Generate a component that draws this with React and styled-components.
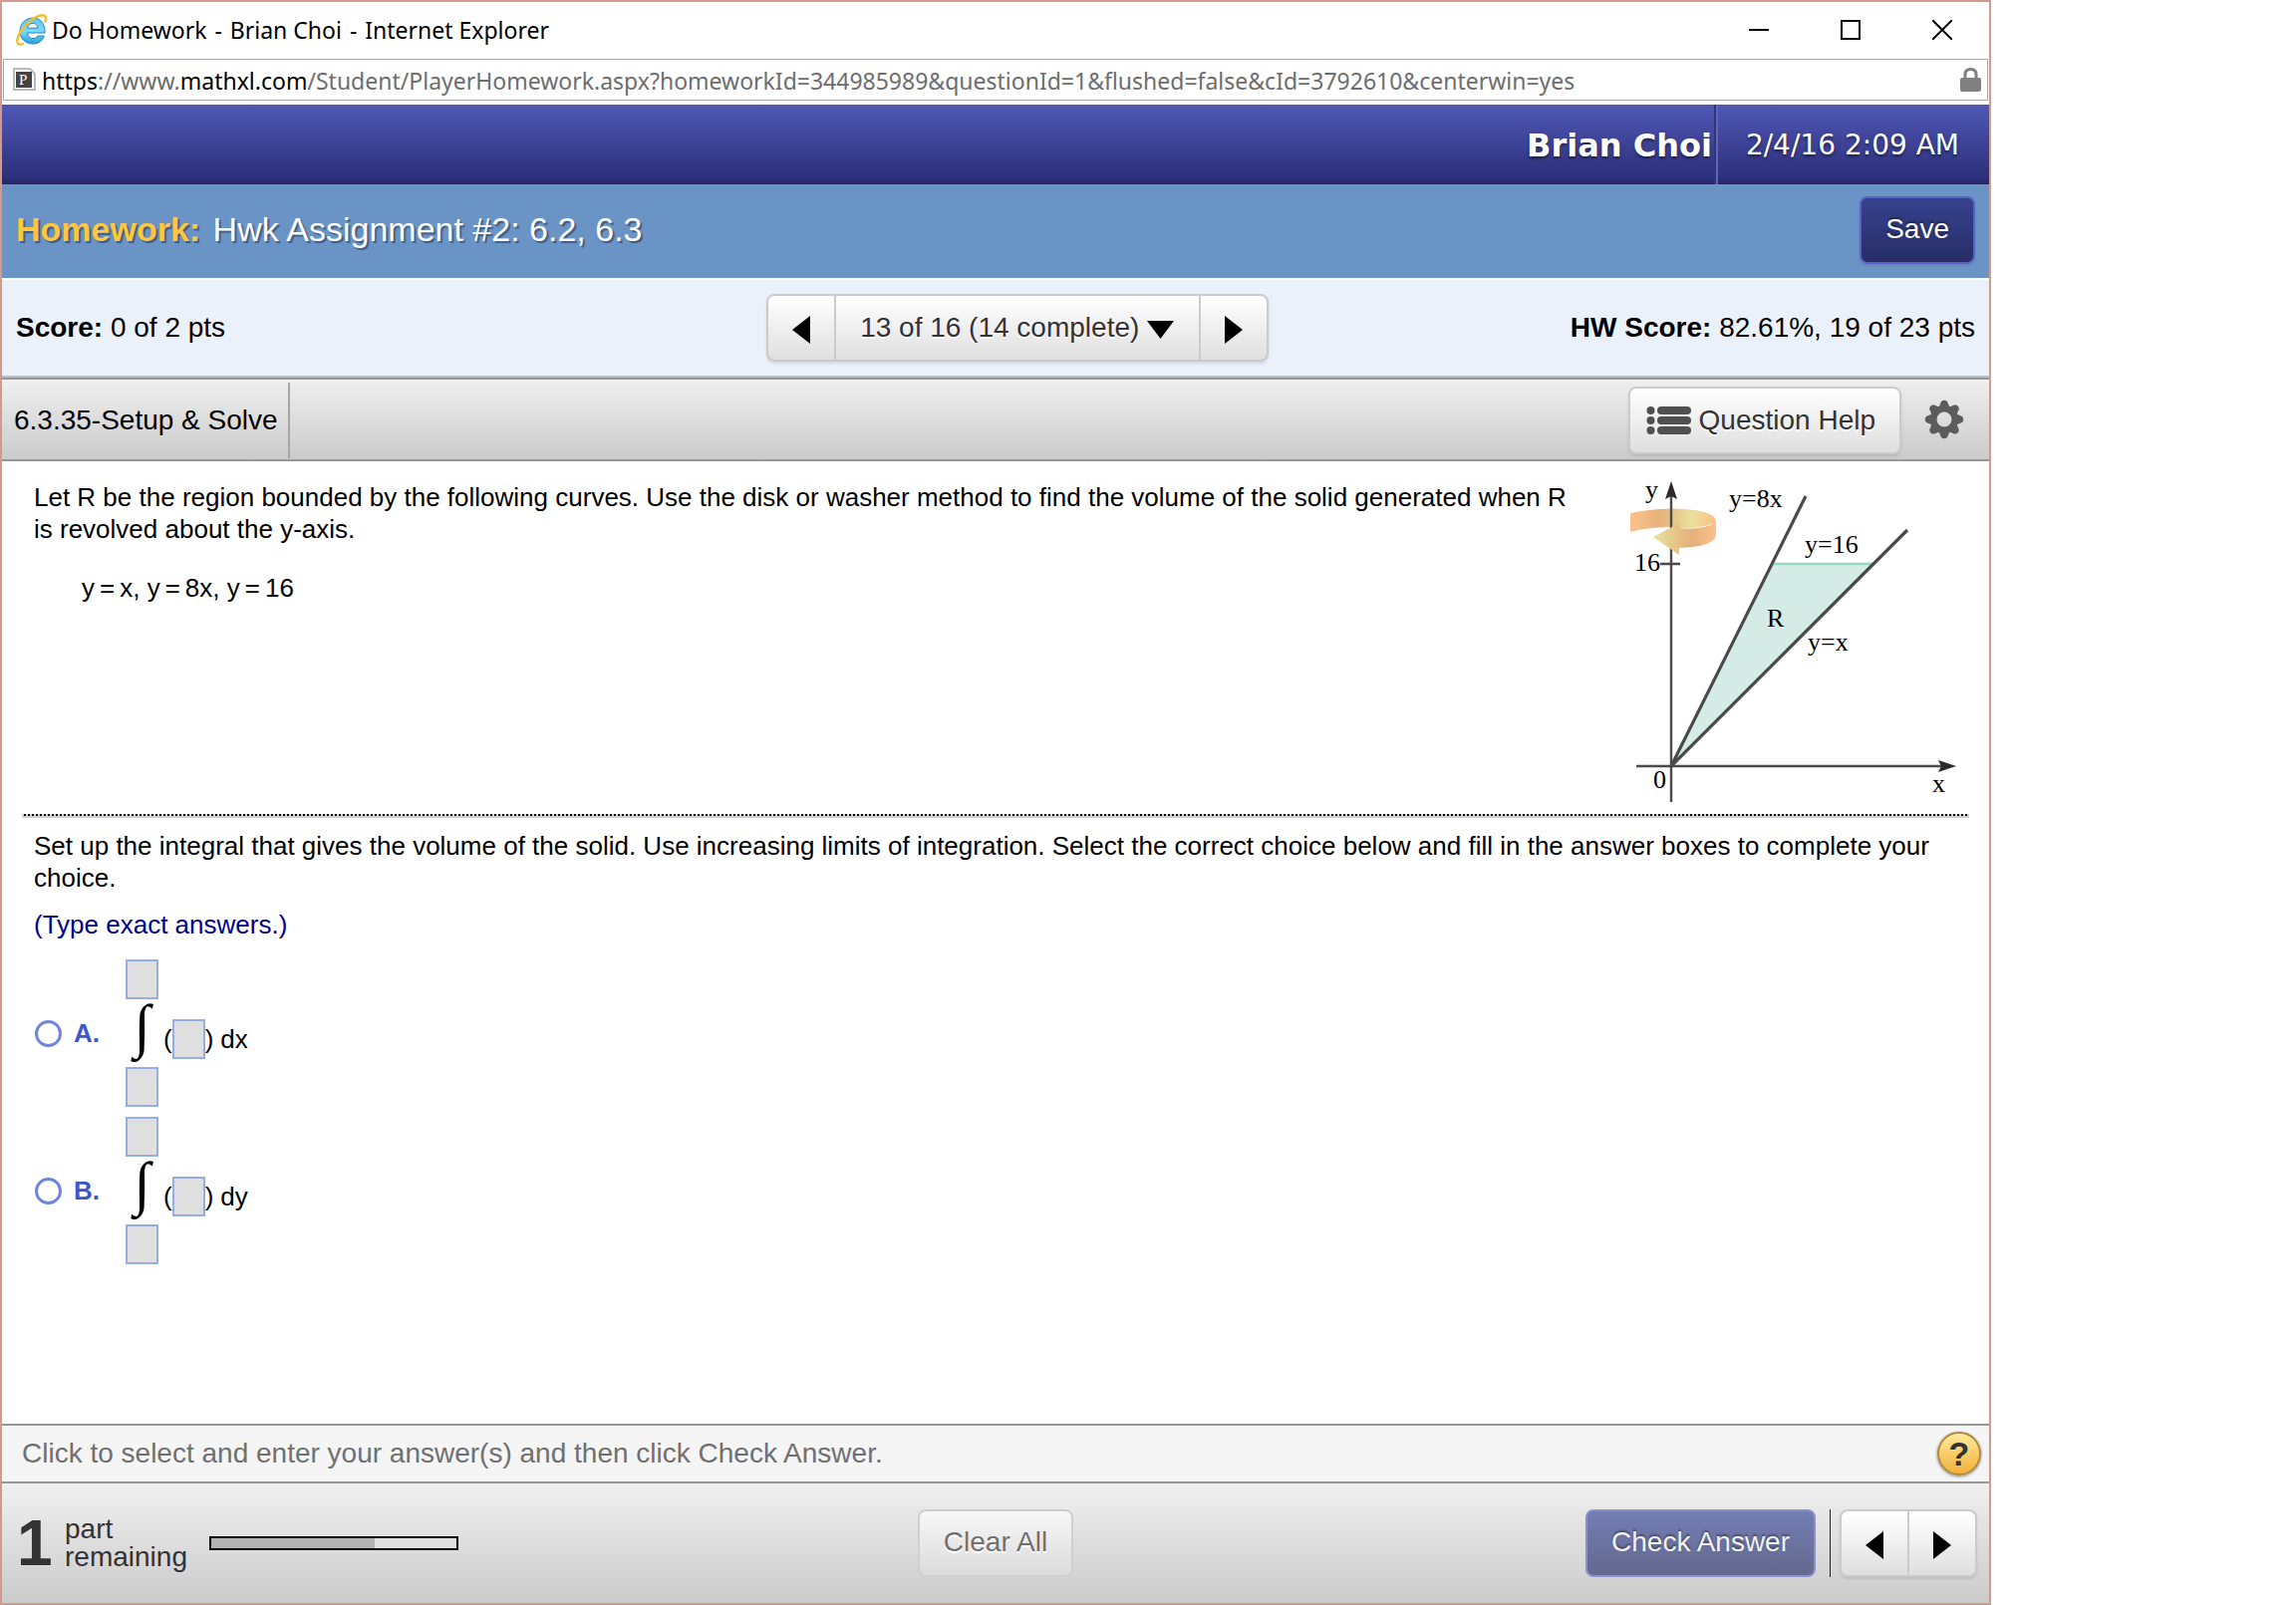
import React from 'react';
import styled, { createGlobalStyle } from 'styled-components';

const GlobalStyle = createGlobalStyle`
    * {
        box-sizing: border-box;
    }

    body {
        margin: 0;
        background: #fff;
        color: #000;
        font-family: 'Liberation Sans', Arial, sans-serif;
    }

    button, input, select {
        margin: 0;
        font-family: inherit;
    }

    svg {
        display: block;
        flex: none;
    }
`;

/* window frame */

const Window = styled.div`
    display: flex;
    flex-direction: column;

    min-height: 100vh;
    margin-right: 306px;

    border: 2px solid #d29a8a;
    background: #fff;
`;

const TitleBar = styled.header`
    display: flex;
    align-items: center;

    height: 57px;
    padding: 0 1px 2px 14px;
`;

const WindowTitle = styled.h1`
    flex: 1;
    margin: 0 0 0 4px;

    font-family: 'Noto Sans', sans-serif;
    font-size: 23px;
    font-weight: 400;
`;

const Dash = styled.span`
    margin: 0 2px;
`;

const WindowButton = styled.button`
    display: flex;
    justify-content: center;
    align-items: center;

    width: 92px;
    height: 54px;
    padding: 0;

    border: 0;
    background: none;
`;

const AddressBar = styled.div`
    display: flex;
    align-items: center;

    height: 42px;
    margin: 0 1px 4px;
    padding: 0 6px 0 9px;

    border: 1px solid #a9a9a9;
`;

const Address = styled.a`
    flex: 1;
    margin-left: 6px;
    padding-top: 2px;

    font-family: 'Noto Sans', sans-serif;
    font-size: 23px;
    line-height: 32px;
    color: #6d6d6d;
    text-decoration: none;
    white-space: nowrap;
`;

const Strong = styled.span`
    color: #000;
`;

/* top bars */

const Banner = styled.div`
    display: flex;
    justify-content: flex-end;

    height: 80px;

    background: linear-gradient(#5058b4, #3d4296 50%, #2b2e78 94%, #22245f);
    color: #fff;
    font-family: 'DejaVu Sans', Verdana, sans-serif;
    line-height: 82px;
    text-shadow: 0 2px 3px rgba(0, 0, 0, 0.5);
`;

const UserName = styled.div`
    padding-right: 4px;

    font-size: 32px;
    font-weight: 700;
`;

const DateTime = styled.div`
    padding: 0 30px 0 28px;

    border-left: 2px solid #6067b4;
    box-shadow: -2px 0 0 #2f3380;
    font-size: 28px;
`;

const HomeworkBar = styled.div`
    display: flex;
    justify-content: space-between;
    align-items: center;

    height: 96px;
    padding: 0 14px 2px 14px;

    border-bottom: 2px solid #fff;
    background: #6b94c6;
`;

const HomeworkTitle = styled.h2`
    margin: 0;
    padding-bottom: 2px;

    color: #fff;
    font-size: 34px;
    font-weight: 400;
    text-shadow: 2px 2px 1px #3f5c80;
`;

const Label = styled.b`
    margin-right: 3px;

    color: #ffc63e;
`;

const Button = styled.button`
    display: flex;
    justify-content: center;
    align-items: center;
    gap: 8px;

    height: 68px;
    padding: 0 24px 2px;

    border: 2px solid ${({ dark }) => (dark ? '#5a60c4' : '#cbcbcb')};
    border-radius: 8px;
    background: ${({ dark }) => (dark ? 'linear-gradient(#37428f, #262d66)' : 'linear-gradient(#fff, #dfdfdf)')};
    box-shadow: 0 2px 3px rgba(0, 0, 0, 0.1);
    color: ${({ dark }) => (dark ? '#fff' : '#333')};
    font-size: 28px;
    text-shadow: ${({ dark }) => (dark ? '0 -2px 2px rgba(0, 0, 0, 0.4)' : '0 2px 1px #fff')};
    white-space: nowrap;
`;

const ClearButton = styled(Button)`
    border-color: #cfcfcf;
    background: linear-gradient(#f7f7f7, #dbdbdb);
    box-shadow: none;
    color: #707070;
`;

const CheckButton = styled(Button)`
    border-color: #8a8fd0;
    background: linear-gradient(#747eb5, #64688d);
    box-shadow: none;
    color: #f2f2f2;
`;

const ScoreBar = styled.div`
    display: grid;
    grid-template-columns: 17fr auto 16fr;
    align-items: center;

    height: 100px;
    padding: 0 14px 2px 14px;

    border-bottom: 2px solid #979797;
    background: linear-gradient(#ebf1fb, #ebf1fb) top / 100% 96px no-repeat #bcbec2;
    font-size: 28px;
`;

const Score = styled.div`
    text-align: ${({ right }) => (right ? 'right' : 'left')};
`;

const ButtonGroup = styled.div`
    display: flex;

    height: 68px;

    border: 2px solid #cbcbcb;
    border-radius: 8px;
    background: linear-gradient(#fff, #dfdfdf);
    box-shadow: 0 2px 3px rgba(0, 0, 0, 0.1);
    overflow: hidden;
`;

const ArrowButton = styled.button`
    display: flex;
    justify-content: center;
    align-items: center;

    width: 66px;
    padding: 4px 0 0;

    border: 0;
    background: none;
`;

const Separator = styled.span`
    width: 2px;

    background: #cbcbcb;
`;

const QuestionPicker = styled.div`
    position: relative;
`;

const QuestionSelect = styled.select`
    width: 364px;
    height: 64px;
    padding: 0 50px 2px 24px;

    appearance: none;
    border: 0;
    background: none;
    color: #333;
    font-size: 28px;
    text-shadow: 0 2px 1px #fff;
`;

const PickerArrow = styled.svg`
    position: absolute;
    top: 25px;
    right: 25px;
    pointer-events: none;
`;

const Toolbar = styled.div`
    display: flex;
    align-items: center;

    height: 82px;
    padding: 2px 25px 0 12px;

    border-bottom: 2px solid #979797;
    background: linear-gradient(#efefef, #cbcbcb);
`;

const ExerciseName = styled.div`
    height: 76px;
    margin-right: auto;
    padding-right: 10px;

    border-right: 2px solid #a6a6a6;
    font-size: 28px;
    line-height: 76px;
`;

const HelpButton = styled(Button)`
    margin-right: 23px;
    padding: 0 24px 0 16px;
`;

const IconButton = styled.button`
    padding: 0 0 2px;

    border: 0;
    background: none;
`;

/* question */

const Content = styled.main`
    flex: 1;
    padding: 20px 20px 0;

    font-size: 26px;
    line-height: 32px;
`;

const Problem = styled.section`
    display: flex;
    gap: 46px;

    padding-left: 12px;
`;

const ProblemText = styled.div`
    flex: 1;
`;

const Paragraph = styled.p`
    margin: 0;
`;

const Curves = styled.p`
    margin: 27px 0 0 48px;
`;

const Equals = styled.span`
    margin: 0 5px;
`;

const GraphSvg = styled.svg`
    margin-top: -10px;
`;

const GraphText = styled.text`
    font-family: 'Liberation Serif', serif;
    font-size: 26px;
`;

const Divider = styled.hr`
    height: 4px;
    margin: 12px 0;

    border: 0;
    background:
        repeating-linear-gradient(90deg, transparent 0 2px, #000 2px 4px) top / 100% 2px no-repeat,
        #cfcfcf;
`;

const Answer = styled.section`
    padding-left: 12px;
`;

const Instruction = styled.p`
    margin: 15px 0 19px;

    color: #00008b;
`;

const Choice = styled.div`
    display: flex;
    align-items: center;

    margin-bottom: 10px;
`;

const Radio = styled.input`
    width: 27px;
    height: 27px;
    margin-left: 1px;

    appearance: none;
    border: 3px solid #6f86da;
    border-radius: 50%;
    background: #fff;
`;

const ChoiceLabel = styled.label`
    width: 52px;
    margin-left: 12px;

    color: #3a57cc;
    font-weight: 700;
`;

const Integral = styled.div`
    display: flex;
    flex-direction: column;
    align-items: center;

    width: 33px;
`;

const IntegralSign = styled.span`
    height: 68px;

    font-family: 'Liberation Serif', serif;
    font-size: 60px;
    line-height: 54px;
`;

const AnswerBox = styled.input`
    width: 33px;
    height: 40px;
    padding: 0;

    border: 2px solid #96aee4;
    background: #dfdfdf;
    font-size: 26px;
    text-align: center;
`;

const Integrand = styled.div`
    display: flex;
    align-items: center;

    margin-left: 5px;
    padding-top: 12px;
`;

const Variable = styled.span`
    margin-left: 7px;
`;

/* bottom bars */

const HintBar = styled.div`
    display: flex;
    justify-content: space-between;
    align-items: center;

    height: 60px;
    padding: 0 8px 0 20px;

    border: solid #979797;
    border-width: 2px 0;
    background: #f5f5f5;
    color: #707070;
    font-size: 28px;
`;

const HelpCircle = styled.button`
    width: 44px;
    height: 44px;
    padding: 0;

    border: 2px solid #b08a3c;
    border-radius: 50%;
    background: linear-gradient(#ffea9c, #f3b03c);
    box-shadow: 0 1px 3px rgba(0, 0, 0, 0.5);
    color: #333;
    font-size: 34px;
    font-weight: 700;
    line-height: 38px;
`;

const Footer = styled.footer`
    display: grid;
    grid-template-columns: 1fr auto 1fr;
    align-items: center;

    height: 120px;
    padding: 0 12px;

    background: linear-gradient(#f0f0f0, #cbcbcb);
`;

const Parts = styled.div`
    display: flex;
    align-items: center;

    color: #333;
    font-size: 28px;
    line-height: 28px;
`;

const PartCount = styled.b`
    width: 51px;
    padding-left: 3px;

    font-size: 64px;
    line-height: 64px;
`;

const Progress = styled.div`
    width: 250px;
    height: 14px;
    margin-left: 22px;

    border: 2px solid #000;
    background: #e0e0e0;
`;

const ProgressFill = styled.div`
    height: 100%;

    background: #b2b2b2;
`;

const Actions = styled.div`
    display: flex;
    justify-content: flex-end;
`;

const ActionLine = styled.span`
    width: 1px;
    margin: 0 9px 0 14px;

    background: #222;
`;

const ExplorerIcon = () => (
    <svg width="32" height="32" viewBox="0 0 32 32">
        <defs>
            <linearGradient id="ie" x1="0" y1="0" x2="0" y2="1">
                <stop offset="0" stopColor="#5cc3ee" />
                <stop offset="0.5" stopColor="#7ddcfb" />
                <stop offset="1" stopColor="#2a9bdc" />
            </linearGradient>
        </defs>
        <path
            d="M29 19H11.500C11.800 22.500 14 24.600 17 24.600C19.300 24.600 21 23.600 21.800 22H28.300C26.800 27 22.500 30 17 30C9.500 30 4 24.800 4 17.200C4 9.600 9.500 4 17 4C24.500 4 29.400 9.800 29 19ZM11.600 14.200H22C21.700 11.200 19.800 9.300 17 9.300C14.100 9.300 12.100 11.200 11.600 14.200Z"
            fill="url(#ie)"
            stroke="#2689c4"
        />
        <path
            d="M7 30C2.500 32 0.500 29.500 1.500 25C3.500 16.500 14.500 3.500 25 1.500C29.500 0.500 31 3 29.300 7.500"
            fill="none"
            stroke="#f5bd2b"
            strokeWidth="2.400"
            strokeLinecap="round"
        />
    </svg>
);

const PageIcon = () => (
    <svg width="23" height="24" viewBox="0 0 23 24">
        <path d="M1 1H17L22 6V22H1Z" fill="#fff" stroke="#bbb" strokeWidth="2" />
        <rect x="3" y="4" width="16" height="16" fill="#444" />
        <text x="6" y="17" fill="#fff" fontFamily="Liberation Serif, serif" fontSize="15">P</text>
    </svg>
);

const LockIcon = () => (
    <svg width="21" height="25" viewBox="0 0 21 25">
        <path d="M5 12V6.500Q5 1.500 10.500 1.500Q16 1.500 16 6.500V12" fill="none" stroke="#808080" strokeWidth="3" />
        <rect y="10" width="21" height="14" rx="2" fill="#808080" />
    </svg>
);

const ListIcon = () => (
    <svg width="45" height="29" viewBox="0 0 45 29" fill="#505050">
        {[4, 14, 24].map((y) => (
            <g key={y}>
                <circle cx="4.500" cy={y} r="4" />
                <rect x="11" y={y - 4} width="34" height="8" rx="4" />
            </g>
        ))}
    </svg>
);

const teeth = [0, 45, 90, 135, 180, 225, 270, 315];

const GearIcon = () => (
    <svg width="40" height="40" viewBox="-20 -20 40 40">
        {teeth.map((angle) => (
            <path key={angle} d="M-5.500 -12L-3 -18Q0 -20.500 3 -18L5.500 -12Z" fill="#5c5c5c" transform={`rotate(${angle})`} />
        ))}
        <circle r="10.800" fill="none" stroke="#5c5c5c" strokeWidth="6.600" />
    </svg>
);

const Arrow = ({ left }) => (
    <svg width="18" height="28" viewBox="0 0 18 28">
        <path d={left ? 'M18 0V28L0 14Z' : 'M0 0V28L18 14Z'} />
    </svg>
);

const labels = [
    { x: 15, y: 17, text: 'y' },
    { x: 99, y: 26, text: 'y=8x' },
    { x: 175, y: 72, text: 'y=16' },
    { x: 4, y: 90, text: '16' },
    { x: 137, y: 146, text: 'R' },
    { x: 178, y: 170, text: 'y=x' },
    { x: 23, y: 308, text: '0' },
    { x: 303, y: 312, text: 'x' },
];

const Graph = () => (
    <GraphSvg width="340" height="332" viewBox="0 -10 340 332">
        <defs>
            <linearGradient id="back">
                <stop offset="0" stopColor="#fdc28a" />
                <stop offset="0.35" stopColor="#e6b17c" />
                <stop offset="0.72" stopColor="#e9e29c" />
                <stop offset="1" stopColor="#fdbf88" />
            </linearGradient>
            <linearGradient id="front">
                <stop offset="0" stopColor="#e9e29c" />
                <stop offset="0.62" stopColor="#e5b07b" />
                <stop offset="1" stopColor="#fdc189" />
            </linearGradient>
        </defs>
        <path d="M41 286L143 83H244Z" fill="#d5ece6" />
        <path d="M144 83H243" stroke="#97d5c6" strokeWidth="2.500" />
        <path d="M0 32Q18 28 41 27.500Q82 28 86 39Q84 46 49 48L41 46Q18 46 0 51Z" fill="url(#back)" />
        <g stroke="#4a4a4c" strokeWidth="2.400" fill="none">
            <path d="M41 10V322M6 286H314M30 83H50" />
            <path d="M41 286L176 15M41 286L278 49" strokeWidth="3.200" />
        </g>
        <path d="M41 0L47 18L41 15L35 18ZM327 286L309 292L312 286L309 280Z" fill="#2c2a2b" />
        <path d="M86 39V54Q84 66 49 67V74L23 56L49 42V48Q82 48 86 39Z" fill="url(#front)" />
        {labels.map(({ x, y, text }) => (
            <GraphText key={text} x={x} y={y}>{text}</GraphText>
        ))}
    </GraphSvg>
);

const choices = [
    { letter: 'A', variable: 'dx' },
    { letter: 'B', variable: 'dy' },
];

const App = () => (
    <>
        <GlobalStyle />
        <Window>
            <TitleBar>
                <ExplorerIcon />
                <WindowTitle>Do Homework <Dash>-</Dash> Brian Choi <Dash>-</Dash> Internet Explorer</WindowTitle>
                <WindowButton aria-label="Minimize">
                    <svg width="20" height="20"><path d="M0 10H20" stroke="#000" strokeWidth="2" /></svg>
                </WindowButton>
                <WindowButton aria-label="Maximize">
                    <svg width="20" height="20"><path d="M1 1H19V19H1Z" stroke="#000" strokeWidth="2" fill="none" /></svg>
                </WindowButton>
                <WindowButton aria-label="Close">
                    <svg width="20" height="20"><path d="M0 0L20 20M20 0L0 20" stroke="#000" strokeWidth="2" /></svg>
                </WindowButton>
            </TitleBar>
            <AddressBar>
                <PageIcon />
                <Address href="#">
                    <Strong>https</Strong>://www.<Strong>mathxl.com</Strong>/Student/PlayerHomework.aspx?homeworkId=344985989&amp;questionId=1&amp;flushed=false&amp;cId=3792610&amp;centerwin=yes
                </Address>
                <LockIcon />
            </AddressBar>
            <Banner>
                <UserName>Brian Choi</UserName>
                <DateTime>2/4/16 2:09 AM</DateTime>
            </Banner>
            <HomeworkBar>
                <HomeworkTitle><Label>Homework:</Label> Hwk Assignment #2: 6.2, 6.3</HomeworkTitle>
                <Button dark>Save</Button>
            </HomeworkBar>
            <ScoreBar>
                <Score><b>Score:</b> 0 of 2 pts</Score>
                <ButtonGroup>
                    <ArrowButton aria-label="Previous question"><Arrow left /></ArrowButton>
                    <Separator />
                    <QuestionPicker>
                        <QuestionSelect aria-label="Question">
                            <option>13 of 16 (14 complete)</option>
                        </QuestionSelect>
                        <PickerArrow width="27" height="18"><path d="M0 0H27L13.500 18Z" /></PickerArrow>
                    </QuestionPicker>
                    <Separator />
                    <ArrowButton aria-label="Next question"><Arrow /></ArrowButton>
                </ButtonGroup>
                <Score right><b>HW Score:</b> 82.61%, 19 of 23 pts</Score>
            </ScoreBar>
            <Toolbar>
                <ExerciseName>6.3.35-Setup &amp; Solve</ExerciseName>
                <HelpButton><ListIcon />Question Help</HelpButton>
                <IconButton aria-label="Settings"><GearIcon /></IconButton>
            </Toolbar>
            <Content>
                <Problem>
                    <ProblemText>
                        <Paragraph>
                            Let R be the region bounded by the following curves. Use the disk or washer method to find the volume of the solid generated when R is revolved about the y-axis.
                        </Paragraph>
                        <Curves>
                            y<Equals>=</Equals>x, y<Equals>=</Equals>8x, y<Equals>=</Equals>16
                        </Curves>
                    </ProblemText>
                    <Graph />
                </Problem>
                <Divider />
                <Answer>
                    <Paragraph>
                        Set up the integral that gives the volume of the solid. Use increasing limits of integration. Select the correct choice below and fill in the answer boxes to complete your choice.
                    </Paragraph>
                    <Instruction>(Type exact answers.)</Instruction>
                    {choices.map(({ letter, variable }) => (
                        <Choice key={letter}>
                            <Radio type="radio" name="choice" id={`choice-${letter}`} />
                            <ChoiceLabel htmlFor={`choice-${letter}`}>{letter}.</ChoiceLabel>
                            <Integral>
                                <AnswerBox aria-label="Upper limit" />
                                <IntegralSign>∫</IntegralSign>
                                <AnswerBox aria-label="Lower limit" />
                            </Integral>
                            <Integrand>
                                (<AnswerBox aria-label="Integrand" />)
                                <Variable>{variable}</Variable>
                            </Integrand>
                        </Choice>
                    ))}
                </Answer>
            </Content>
            <HintBar>
                Click to select and enter your answer(s) and then click Check Answer.
                <HelpCircle>?</HelpCircle>
            </HintBar>
            <Footer>
                <Parts>
                    <PartCount>1</PartCount>
                    <div>part<br />remaining</div>
                    <Progress role="progressbar" aria-label="Progress" aria-valuenow={2} aria-valuemax={3}>
                        <ProgressFill style={{ width: `${(2 / 3) * 100}%` }} />
                    </Progress>
                </Parts>
                <ClearButton>Clear All</ClearButton>
                <Actions>
                    <CheckButton dark>Check Answer</CheckButton>
                    <ActionLine />
                    <ButtonGroup>
                        <ArrowButton aria-label="Previous"><Arrow left /></ArrowButton>
                        <Separator />
                        <ArrowButton aria-label="Next"><Arrow /></ArrowButton>
                    </ButtonGroup>
                </Actions>
            </Footer>
        </Window>
    </>
);

export default App;
